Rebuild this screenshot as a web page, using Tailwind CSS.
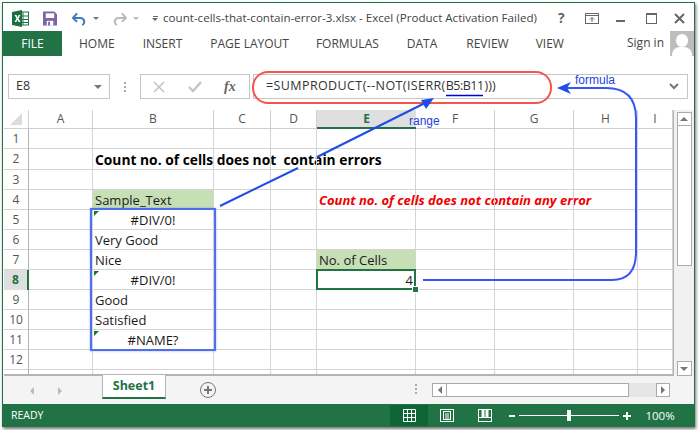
<!DOCTYPE html>
<html lang="en">
<head>
    <meta charset="UTF-8">
    <title>count-cells-that-contain-error-3.xlsx - Excel</title>
    <script src="https://cdn.jsdelivr.net/npm/@tailwindcss/browser@4"></script>
</head>
<body class="bg-white w-[700px] h-[430px] overflow-hidden relative font-['Open_Sans',sans-serif] text-[#444]">
    <!-- Window -->
    <div class="absolute left-[2px] top-[2px] w-[693px] h-[425px] border border-[#217346] border-b-0 shadow-[1px_2px_3px_rgba(0,0,0,0.55)] bg-white flex flex-col">

        <!-- Title bar -->
        <div class="h-[28px] flex items-center shrink-0 relative">
            <svg class="shrink-0 ml-[9px] mt-[3px]" width="17" height="17" viewBox="0 0 17 17">
                <rect x="6" y="2" width="10.500" height="13" fill="#fff" stroke="#217346"/>
                <path d="M11 2v13M6 6h11M6 9.500h11M6 12.500h11" stroke="#217346" stroke-width="1"/>
                <path d="M0 2l10-2v17L0 15z" fill="#1d6f42"/>
                <path d="M2.500 5h2l1 2.200L6.600 5h1.900L6.500 8.500l2 3.500H6.600L5.400 9.800 4.300 12H2.500l2-3.500z" fill="#fff"/>
            </svg>
            <svg class="shrink-0 ml-[14px] mt-[3px]" width="14" height="15" viewBox="0 0 15 15">
                <path d="M0 0h12l3 3v12H0z" fill="#8064a8"/>
                <rect x="3" y="2" width="9" height="5" fill="#fff"/>
                <rect x="4" y="10" width="7" height="5" fill="#fff"/>
                <rect x="5.500" y="11" width="2" height="4" fill="#8064a8"/>
            </svg>
            <svg class="shrink-0 ml-[15px] mt-[3px]" width="14" height="14" viewBox="0 0 15 15" fill="none">
                <path d="M1.500 6.500H9a4 4 0 0 1 2 7.500" stroke="#3f7cbf" stroke-width="2.200"/>
                <path d="M5.500 1.500l-4.500 5 4.500 4" stroke="#3f7cbf" stroke-width="2.200"/>
            </svg>
            <span class="shrink-0 ml-[7px] mt-[3px] border-x-[3px] border-x-transparent border-t-[3px] border-t-[#777]"></span>
            <svg class="shrink-0 ml-[14px] mt-[3px]" width="14" height="14" viewBox="0 0 15 15" fill="none">
                <path d="M13.500 6.500H6a4 4 0 0 0-2 7.500" stroke="#bbb" stroke-width="2.200"/>
                <path d="M9.500 1.500l4.500 5-4.500 4" stroke="#bbb" stroke-width="2.200"/>
            </svg>
            <span class="shrink-0 ml-[6px] mt-[3px] border-x-[3px] border-x-transparent border-t-[3px] border-t-[#bbb]"></span>
            <div class="shrink-0 ml-[13px] mt-[3px] flex flex-col items-center gap-[1px]">
                <span class="w-[5px] h-[1px] bg-[#666]"></span>
                <span class="border-x-[3px] border-x-transparent border-t-[3px] border-t-[#666]"></span>
            </div>
            <span class="ml-[5px] mt-[2px] w-[372px] shrink-0 text-[11.600px] whitespace-nowrap">count-cells-that-contain-error-3.xlsx - Excel (Product Activation Failed)</span>
            <span class="shrink-0 ml-[23px] mt-[1px] font-bold text-[14px] text-[#666]">?</span>
            <svg class="shrink-0 ml-[20px] mt-[3px]" width="14" height="11" viewBox="0 0 14 11" fill="none" stroke="#666">
                <rect x=".5" y=".5" width="13" height="10"/><path d="M1 2.500h12M7 9V4.500M5 6.500l2-2 2 2"/>
            </svg>
            <span class="shrink-0 ml-[17px] mt-[7px] w-[9px] h-[2px] bg-[#666]"></span>
            <span class="shrink-0 ml-[21px] mt-[3px] w-[11px] h-[11px] border border-[#666] border-t-2"></span>
            <svg class="shrink-0 ml-[17px] mt-[3px]" width="11" height="11" viewBox="0 0 11 11" stroke="#666" stroke-width="2">
                <path d="M1 1l9 9M10 1l-9 9"/>
            </svg>
        </div>

        <!-- Ribbon tabs -->
        <div class="h-[25px] flex items-center shrink-0 text-[12px] relative">
            <div class="w-[59px] h-full bg-[#217346] text-white flex items-center justify-center">FILE</div>
            <span class="ml-[17px]">HOME</span>
            <span class="ml-[28px]">INSERT</span>
            <span class="ml-[28px]">PAGE LAYOUT</span>
            <span class="ml-[27px]">FORMULAS</span>
            <span class="ml-[28px]">DATA</span>
            <span class="ml-[29px]">REVIEW</span>
            <span class="ml-[27px]">VIEW</span>
            <span class="ml-auto mr-[6px] mb-[2px]">Sign in</span>
            <div class="w-[24px] h-full bg-[#bdbdbd] overflow-hidden relative">
                <span class="absolute left-[6px] top-[3px] w-[12px] h-[13px] rounded-full bg-white"></span>
                <span class="absolute left-[2px] top-[16px] w-[20px] h-[12px] rounded-t-lg bg-white"></span>
            </div>
        </div>

        <!-- Formula bar -->
        <div class="h-[54px] shrink-0 pt-[18px] pl-[5px] pr-[5px] flex items-start">
            <div class="w-[102px] h-[25px] border border-[#c6c6c6] flex items-center pl-[7px] pr-[7px] justify-between text-[12.500px] text-[#333]">
                <span>E8</span>
                <span class="border-x-[4px] border-x-transparent border-t-[4px] border-t-[#777]"></span>
            </div>
            <div class="w-[30px] h-[25px] flex flex-col items-center justify-center gap-[2px]">
                <span class="w-[2px] h-[2px] bg-[#aaa]"></span>
                <span class="w-[2px] h-[2px] bg-[#aaa]"></span>
                <span class="w-[2px] h-[2px] bg-[#aaa]"></span>
            </div>
            <div class="w-[110px] h-[25px] border border-[#c6c6c6] flex items-center">
                <svg class="shrink-0 ml-[12px]" width="12" height="12" viewBox="0 0 12 12" stroke="#c4c4c4" stroke-width="1.600"><path d="M1 1l10 10M11 1L1 11"/></svg>
                <svg class="shrink-0 ml-[23px]" width="14" height="12" viewBox="0 0 14 12" fill="none" stroke="#c4c4c4" stroke-width="2.400"><path d="M1 6l4 4 8-9"/></svg>
                <span class="ml-[22px] font-['Liberation_Serif',serif] italic font-bold text-[14px] text-[#666]">fx</span>
            </div>
            <div class="ml-[3px] w-[435px] h-[25px] border border-[#c6c6c6] flex items-center pl-[12px] pr-[8px] text-[12.500px] text-[#333]">
                <span class="whitespace-nowrap tracking-[0.4px]">=SUMPRODUCT(--NOT(ISERR(</span><span class="whitespace-nowrap tracking-[-0.5px]">B5:B11</span><span class="whitespace-nowrap ml-[1px]">)))</span>
                <svg class="ml-auto" width="10" height="7" viewBox="0 0 10 7" fill="none" stroke="#777" stroke-width="2"><path d="M1 1l4 4 4-4"/></svg>
            </div>
        </div>

        <!-- Sheet area -->
        <div class="h-[266px] shrink-0 flex">
            <div id="sheet" class="ml-[1px] w-[669px] grid grid-cols-[25px_64px_121px_57px_46px_99px_79px_79px_64px_35px] grid-rows-[19px_20px_21px_20px_20px_20px_20px_20px_20px_20px_20px_20px_20px_6px] border-b-2 border-[#b4b4b4] overflow-hidden text-[13px] text-[#1a1a1a]"></div>
            <!-- Vertical scrollbar -->
            <div class="w-[21px] bg-[#f1f1f1] flex flex-col items-center relative border-l border-[#b4b4b4]">
                <div class="w-[15px] h-[14px] mt-[2px] border border-[#ababab] bg-white flex items-center justify-center">
                    <span class="border-x-[4px] border-x-transparent border-b-[4px] border-b-[#777]"></span>
                </div>
                <div class="w-[15px] h-[141px] border border-[#ababab] bg-white -mt-[1px]"></div>
                <div class="w-[15px] h-[15px] mt-auto border border-[#ababab] bg-white flex items-center justify-center">
                    <span class="border-x-[4px] border-x-transparent border-t-[4px] border-t-[#777]"></span>
                </div>
            </div>
        </div>

        <!-- Sheet tabs and horizontal scrollbar -->
        <div class="h-[28px] shrink-0 flex items-start bg-[#f4f4f4] relative">
            <span class="ml-[27px] mt-[11px] border-y-[4px] border-y-transparent border-r-[4px] border-r-[#bbb]"></span>
            <span class="ml-[24px] mt-[11px] border-y-[4px] border-y-transparent border-l-[4px] border-l-[#bbb]"></span>
            <div class="ml-[40px] w-[64px] h-[24px] -mt-[1px] bg-white border-x border-[#b4b4b4] border-b-2 border-b-[#217346] flex items-center justify-center text-[12.500px] font-bold text-[#217346]">Sheet1</div>
            <div class="ml-[34px] mt-[6px] w-[16px] h-[16px] rounded-full border border-[#777] flex items-center justify-center text-[#777]">
                <svg width="10" height="10" viewBox="0 0 10 10" stroke="#777" stroke-width="2"><path d="M5 1v8M1 5h8"/></svg>
            </div>
            <div class="ml-[199px] mt-[8px] flex flex-col gap-[2px]">
                <span class="w-[2px] h-[2px] bg-[#aaa]"></span>
                <span class="w-[2px] h-[2px] bg-[#aaa]"></span>
                <span class="w-[2px] h-[2px] bg-[#aaa]"></span>
            </div>
            <div class="ml-[15px] mt-[7px] h-[14px] w-[238px] flex bg-[#e6e6e6]">
                <div class="w-[15px] border border-[#ababab] bg-white flex items-center justify-center">
                    <span class="border-y-[4px] border-y-transparent border-r-[4px] border-r-[#777]"></span>
                </div>
                <div class="w-[182px] border-y border-r border-[#ababab] bg-white"></div>
                <div class="w-[14px] ml-auto border border-[#ababab] bg-white flex items-center justify-center">
                    <span class="border-y-[4px] border-y-transparent border-l-[4px] border-l-[#777]"></span>
                </div>
            </div>
        </div>

        <!-- Status bar -->
        <div class="h-[23px] shrink-0 bg-[#217346] text-white text-[10.500px] flex items-center">
            <span class="ml-[8px]">READY</span>
            <div class="ml-[347px] w-[38px] h-[21px] bg-[#0f6537] flex items-center justify-center">
                <svg width="13" height="13" viewBox="0 0 13 13" fill="none" stroke="#fff"><path d="M.5.500h12v12H.500zM4.500.500v12M8.500.500v12M.5 4.500h12M.5 8.500h12"/></svg>
            </div>
            <svg class="ml-[12px]" width="14" height="13" viewBox="0 0 14 13" fill="none" stroke="#fff"><rect x=".5" y=".5" width="13" height="12"/><rect x="3.500" y="2.500" width="7" height="8"/><path d="M5 5h4M5 7h4M5 9h4"/></svg>
            <svg class="ml-[24px]" width="14" height="13" viewBox="0 0 14 13" fill="none" stroke="#fff"><rect x=".5" y=".5" width="13" height="12"/><path d="M1 8.500h12" /><path d="M4 1h2v7H4zM8 1h2v7H8z" fill="#fff"/></svg>
            <span class="ml-[17px] w-[6px] h-[2px] bg-white"></span>
            <div class="ml-[4px] w-[100px] h-[1px] bg-white relative">
                <span class="absolute left-[48px] -top-[5px] w-[4px] h-[11px] bg-white"></span>
            </div>
            <svg class="ml-[4px]" width="8" height="8" viewBox="0 0 8 8" stroke="#fff" stroke-width="2"><path d="M4 0v8M0 4h8"/></svg>
            <span class="ml-[14px] text-[11.500px]">100%</span>
        </div>
    </div>

    <!-- Cell selection and range box -->
    <div class="absolute left-[316px] top-[269px] w-[100px] h-[21px] border-2 border-[#217346]"></div>
    <div class="absolute left-[412px] top-[286px] w-[5px] h-[5px] bg-[#217346] border border-white box-content"></div>
    <div class="absolute left-[90px] top-[208px] w-[126px] h-[143px] border-2 border-[#4f6ef0] shadow-[0_0_2px_rgba(80,110,240,0.5)]"></div>

    <!-- Annotations -->
    <svg class="absolute left-0 top-0" width="700" height="430" fill="none">
        <rect x="253" y="72" width="298" height="31" rx="15" stroke="#f4564e" stroke-width="2"/>
        <path d="M446 95.500H483" stroke="#0000d8" stroke-width="1.500"/>
        <path d="M220 206L298 168M317 157L425 103" stroke="#1f4be8" stroke-width="2"/>
        <path d="M434 98L421 100L426 109z" fill="#1f4be8"/>
        <path d="M423 280H612Q636 280 636 252V118Q636 88 606 88H565" stroke="#3557f5" stroke-width="2"/>
        <path d="M557 88L571 82L567 88L571 94z" fill="#1f4be8"/>
    </svg>
    <span class="absolute left-[575px] top-[71px] font-['Liberation_Sans',sans-serif] text-[12px] text-[#1f3fe0]">formula</span>
    <span class="absolute left-[409px] top-[112px] font-['Liberation_Sans',sans-serif] text-[12px] text-[#1f3fe0]">range</span>

    <script>
        const colNames = ["", "A", "B", "C", "D", "E", "F", "G", "H", "I"];
        const gridCell = "border-r border-b border-[#d4d4d4] relative whitespace-nowrap flex items-center";
        const headCell = "border-r border-b border-[#cfcfcf] bg-white flex items-center justify-center text-[12px] text-[#555]";
        const activeHead = "border-b-2 border-b-[#217346] bg-[#dfdfdf] flex items-center justify-center text-[12px] font-bold text-[#217346]";
        const rowHead = "border-r border-r-[#b4b4b4] border-b border-b-[#d4d4d4] flex items-center justify-center text-[12px] text-[#555]";
        const activeRow = "border-r-2 border-r-[#217346] bg-[#dfdfdf] flex items-center justify-center text-[12px] font-bold text-[#217346]";
        const marker = '<span class="absolute left-[1px] top-[1px] border-t-[5px] border-t-[#0f7d1f] border-r-[5px] border-r-transparent"></span>';

        // B and E columns are the only ones with content, the rest stay blank
        const cells = {
            "B2": '<span class="pl-[2px] mt-[2px] text-[13.800px] font-bold text-black">Count no. of cells does not &nbsp;contain errors</span>',
            "B4": '<div class="w-full h-full bg-[#c6dfb4] flex items-center pl-[2px] pt-[2px]">Sample_Text</div>',
            "B5": marker + '<span class="w-full mt-[2px] text-center">#DIV/0!</span>',
            "B6": '<span class="pl-[2px] mt-[2px]">Very Good</span>',
            "B7": '<span class="pl-[2px] mt-[2px]">Nice</span>',
            "B8": marker + '<span class="w-full mt-[2px] text-center">#DIV/0!</span>',
            "B9": '<span class="pl-[2px] mt-[2px]">Good</span>',
            "B10": '<span class="pl-[2px] mt-[2px]">Satisfied</span>',
            "B11": marker + '<span class="w-full mt-[2px] text-center">#NAME?</span>',
            "E4": '<span class="pl-[2px] mt-[2px] font-bold italic text-[#f00000]">Count no. of cells does not contain any error</span>',
            "E7": '<div class="w-full h-full bg-[#c6dfb4] flex items-center pl-[2px] pt-[2px]">No. of Cells</div>',
            "E8": '<span class="w-full mt-[2px] text-right pr-[2px]">4</span>'
        };

        let html = "";
        colNames.forEach((c, i) => {
            if (i === 0) html += `<div class="${headCell}"><svg width="12" height="12" viewBox="0 0 12 12"><path d="M12 0v12H0z" fill="#dcdcdc"/></svg></div>`;
            else html += `<div class="${c === "E" ? activeHead : headCell}">${c}</div>`;
        });
        for (let r = 1; r <= 13; r++) {
            const label = r < 13 ? r : "";
            html += `<div class="${r === 8 ? activeRow : rowHead}">${label}</div>`;
            for (let i = 1; i < colNames.length; i++) {
                html += `<div class="${gridCell}">${cells[colNames[i] + r] || ""}</div>`;
            }
        }
        document.getElementById("sheet").innerHTML = html;
    </script>
</body>
</html>
